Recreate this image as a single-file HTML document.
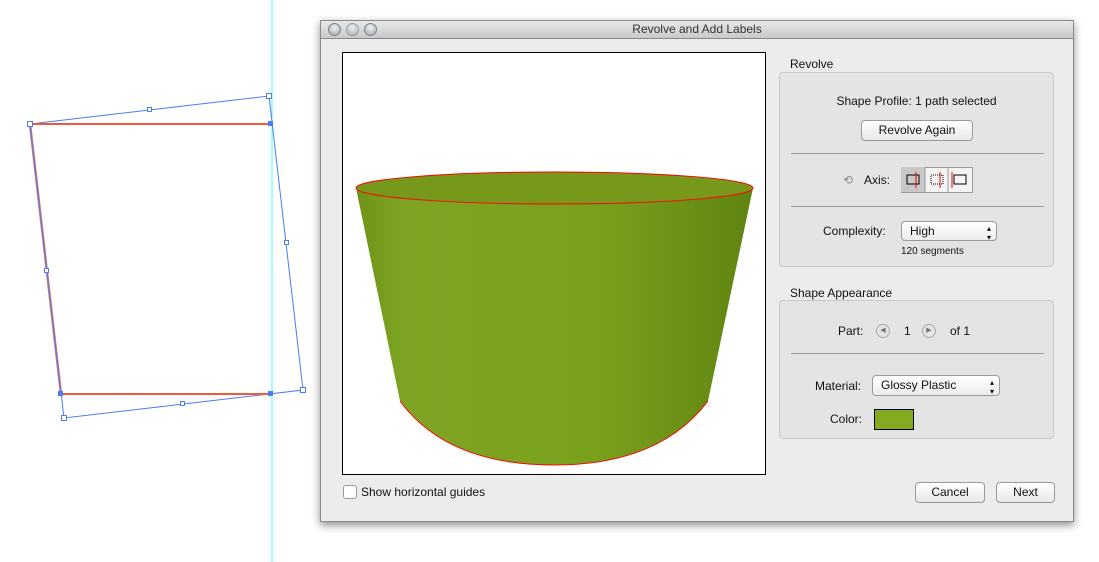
<!DOCTYPE html>
<html><head><style>
body{margin:0;width:1099px;height:562px;background:#fff;position:relative;overflow:hidden;font-family:"Liberation Sans",sans-serif;font-size:12px;color:#111}
.a{position:absolute}
.win{left:320px;top:20px;width:752px;height:500px;background:#ececec;border:1px solid #8a8a8a;box-shadow:0 3px 8px rgba(0,0,0,.45)}
.title{left:0;top:0;width:752px;height:17px;background:linear-gradient(#e8e8e8,#c9c9c9);border-bottom:1px solid #888;text-align:center;line-height:17px;font-size:12px;color:#333}
.dot{width:11px;height:11px;border-radius:50%;background:radial-gradient(circle at 50% 35%,#f2f4f6,#9aa3ad);border:1px solid #7d838a;top:2px}
.box{background:#e4e4e4;border:1px solid #c9c9c9;border-radius:4px}
.btn{background:linear-gradient(#fff,#e8e8e8);border:1px solid #9a9a9a;border-radius:4px;text-align:center;line-height:19px;font-size:12px}
.sel{background:linear-gradient(#fff,#ececec);border:1px solid #9a9a9a;border-radius:4px;line-height:19px;padding-left:8px;box-sizing:border-box}
.hr{height:1px;background:#9c9c9c}
</style></head><body>
<svg class="a" style="left:0;top:0" width="320" height="562">
<line x1="272" y1="0" x2="272" y2="562" stroke="#4ff" stroke-width="1"/>
<polygon points="30,124 269,96 303,390 64,418" fill="none" stroke="#4b7cf3" stroke-width="1"/>
<line x1="30" y1="124" x2="271" y2="124" stroke="#f05a3c" stroke-width="2"/>
<line x1="61" y1="394" x2="271" y2="394" stroke="#f05a3c" stroke-width="2"/>
<line x1="30" y1="124" x2="61" y2="394" stroke="#f07a50" stroke-width="2.5"/>
<line x1="30" y1="124" x2="61" y2="394" stroke="#4b7cf3" stroke-width="1.2"/>
<g fill="#fff" stroke="#4b7cf3"><rect x="27.5" y="121.5" width="5" height="5"/><rect x="266.5" y="93.5" width="5" height="5"/><rect x="147.5" y="107.5" width="4" height="4"/><rect x="284.5" y="240.5" width="4" height="4"/><rect x="300.5" y="387.5" width="5" height="5"/><rect x="61.5" y="415.5" width="5" height="5"/><rect x="180.5" y="401.5" width="4" height="4"/><rect x="44.5" y="268.5" width="4" height="4"/></g>
<g fill="#4b7cf3"><rect x="268" y="121" width="5" height="5"/><rect x="268" y="391" width="5" height="5"/><rect x="58" y="391" width="5" height="5"/></g>
</svg>
<div class="a win">
<div class="a title">Revolve and Add Labels</div>
<div class="a dot" style="left:7px"></div><div class="a dot" style="left:25px;opacity:.7"></div><div class="a dot" style="left:43px"></div>
<div class="a" style="left:0;top:-2px;width:752px;height:500px">
<div class="a" style="left:21px;top:33px;width:422px;height:421px;background:#fff;border:1px solid #000">
<svg width="423" height="422">
<defs><linearGradient id="g" x1="0" x2="1"><stop offset="0" stop-color="#6d9418"/><stop offset=".12" stop-color="#7ea423"/><stop offset=".6" stop-color="#7aa11c"/><stop offset="1" stop-color="#5f8511"/></linearGradient></defs>
<path d="M13,135 L57,348 Q104,412 211,412 Q317,412 365,348 L410,135 Z" fill="url(#g)"/>
<path d="M57,348 Q104,412 211,412 Q317,412 365,348" fill="none" stroke="#f00" stroke-width="1"/>
<ellipse cx="211.5" cy="135" rx="198.5" ry="16" fill="#76991c" stroke="#f00" stroke-width="1"/>
</svg></div>
<div class="a" style="left:22px;top:466px;width:12px;height:12px;border:1px solid #9a9a9a;border-radius:3px;background:#fff"></div>
<div class="a" style="left:40px;top:466px">Show horizontal guides</div>
<div class="a" style="left:469px;top:38px">Revolve</div>
<div class="a box" style="left:458px;top:53px;width:273px;height:193px"></div>
<div class="a" style="left:458px;top:75px;width:275px;text-align:center">Shape Profile: 1 path selected</div>
<div class="a btn" style="left:540px;top:101px;width:110px;height:19px">Revolve Again</div>
<div class="a hr" style="left:470px;top:134px;width:253px"></div>
<div class="a" style="left:522px;top:154px;color:#888">⟲</div>
<div class="a" style="left:543px;top:154px">Axis:</div>
<div class="a" style="left:580px;top:148px;width:70px;height:24px;border:1px solid #9a9a9a;background:#f4f4f4"></div>
<div class="a" style="left:580px;top:148px;width:24px;height:25px;background:#c8c8c8"></div>
<svg class="a" style="left:580px;top:148px" width="72" height="26"><g stroke="#000" fill="none"><rect x="6" y="8" width="12" height="9"/><rect x="30" y="8" width="12" height="9" stroke-dasharray="1 1"/><rect x="53" y="8" width="12" height="9"/></g><g stroke="#e00"><line x1="15" y1="5" x2="15" y2="21"/><line x1="39" y1="5" x2="39" y2="21"/><line x1="51" y1="5" x2="51" y2="21"/></g><line x1="24" y1="0" x2="24" y2="26" stroke="#9a9a9a"/><line x1="47" y1="0" x2="47" y2="26" stroke="#9a9a9a"/></svg>
<div class="a hr" style="left:470px;top:187px;width:253px"></div>
<div class="a" style="left:502px;top:205px">Complexity:</div>
<div class="a sel" style="left:580px;top:202px;width:96px;height:20px">High<span style="position:absolute;right:5px;font-size:8px;line-height:9px;top:2px">▴<br>▾</span></div>
<div class="a" style="left:580px;top:227px;font-size:10px">120 segments</div>
<div class="a" style="left:469px;top:267px">Shape Appearance</div>
<div class="a box" style="left:458px;top:281px;width:273px;height:137px"></div>
<div class="a" style="left:517px;top:305px">Part:</div>
<div class="a" style="left:555px;top:305px;width:12px;height:12px;border:1px solid #aaa;border-radius:50%;font-size:7px;text-align:center;line-height:12px;color:#777">◀</div>
<div class="a" style="left:583px;top:305px">1</div>
<div class="a" style="left:601px;top:305px;width:12px;height:12px;border:1px solid #aaa;border-radius:50%;font-size:7px;text-align:center;line-height:12px;color:#777">▶</div>
<div class="a" style="left:629px;top:305px">of 1</div>
<div class="a hr" style="left:470px;top:334px;width:253px"></div>
<div class="a" style="left:494px;top:360px">Material:</div>
<div class="a sel" style="left:551px;top:356px;width:128px;height:21px">Glossy Plastic<span style="position:absolute;right:5px;font-size:8px;line-height:9px;top:2px">▴<br>▾</span></div>
<div class="a" style="left:509px;top:393px">Color:</div>
<div class="a" style="left:553px;top:390px;width:38px;height:19px;background:#85aa1f;border:1px solid #000"></div>
<div class="a btn" style="left:594px;top:463px;width:68px;height:19px">Cancel</div>
<div class="a btn" style="left:675px;top:463px;width:57px;height:19px">Next</div>
</div>
</div>
</body></html>
